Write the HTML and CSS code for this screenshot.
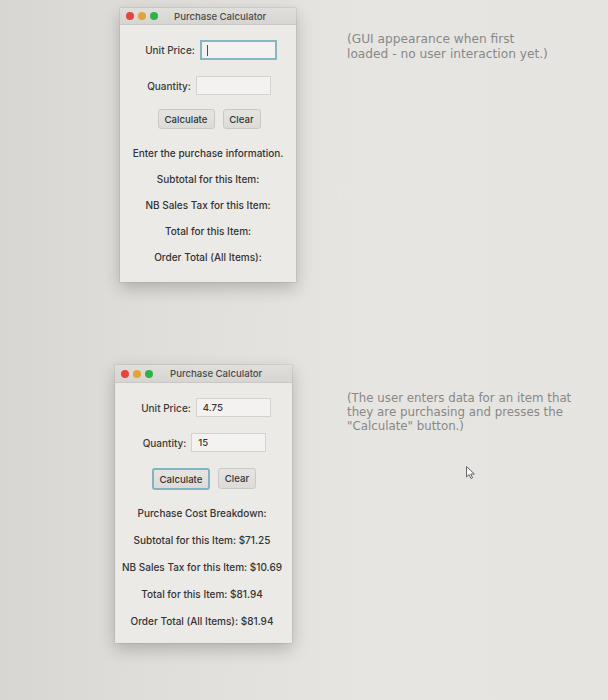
FILE: index.html
```html
<!DOCTYPE html>
<html>
<head>
<meta charset="utf-8">
<link rel="stylesheet" href="styles.css">
</head>
<body>
<div class="desk">
  <section class="row row1">
    <div class="win win1">
      <div class="titlebar">
        <span class="dot red"></span><span class="dot yellow"></span><span class="dot green"></span>
        <span class="title">Purchase Calculator</span>
      </div>
      <div class="body">
        <div class="field f1"><span class="lbl">Unit Price:</span><span class="input focus"><span class="caret"></span></span></div>
        <div class="field f2"><span class="lbl">Quantity:</span><span class="input"></span></div>
        <div class="buttons"><span class="btn calc">Calculate</span><span class="btn clear">Clear</span></div>
        <div class="lines">
          <p>Enter the purchase information.</p>
          <p>Subtotal for this Item:</p>
          <p>NB Sales Tax for this Item:</p>
          <p>Total for this Item:</p>
          <p>Order Total (All Items):</p>
        </div>
      </div>
    </div>
    <div class="note note1">
      <p>(GUI appearance when first</p>
      <p>loaded - no user interaction yet.)</p>
    </div>
    <span class="mark">C</span>
  </section>

  <section class="row row2">
    <div class="win win2">
      <div class="titlebar">
        <span class="dot red"></span><span class="dot yellow"></span><span class="dot green"></span>
        <span class="title">Purchase Calculator</span>
      </div>
      <div class="body">
        <div class="field f1"><span class="lbl">Unit Price:</span><span class="input">4.75</span></div>
        <div class="field f2"><span class="lbl">Quantity:</span><span class="input">15</span></div>
        <div class="buttons"><span class="btn calc focus">Calculate</span><span class="btn clear">Clear</span></div>
        <div class="lines">
          <p>Purchase Cost Breakdown:</p>
          <p>Subtotal for this Item: $71.25</p>
          <p>NB Sales Tax for this Item: $10.69</p>
          <p>Total for this Item: $81.94</p>
          <p>Order Total (All Items): $81.94</p>
        </div>
      </div>
    </div>
    <div class="note note2">
      <p>(The user enters data for an item that</p>
      <p>they are purchasing and presses the</p>
      <p>"Calculate" button.)</p>
      <svg class="cursor" width="12" height="15" viewBox="0 0 12 15"><path d="M1.5 1.5 L1.5 12 L4 9.6 L6 13.6 L7.6 12.8 L5.7 9 L9.4 9 Z" fill="#fafafa" stroke="#555" stroke-width="0.9" stroke-linejoin="round"/></svg>
    </div>
  </section>
</div>
</body>
</html>
```

FILE: styles.css
```css
html, body {
  margin: 0;
  padding: 0;
}
body {
  width: 608px;
  height: 700px;
  overflow: hidden;
  background: linear-gradient(90deg, #d8d6d2 0%, #e0deda 25%, #e7e5e1 60%, #e6e4e0 100%);
  font-family: "Inter", "Liberation Sans", sans-serif;
}
.desk {
  display: flex;
  flex-direction: column;
}
.row {
  display: flex;
  align-items: flex-start;
  position: relative;
}
.row1 {
  padding-top: 8px;
  padding-left: 120px;
}
.row2 {
  padding-top: 83px;
  padding-left: 115px;
}
.win {
  background: #ebeae7;
  box-shadow: 0 0 1px rgba(0,0,0,0.35), 0 6px 16px rgba(0,0,0,0.22);
  display: flex;
  flex-direction: column;
}
.win1 { width: 176px; height: 274px; }
.win2 { width: 177px; height: 278px; }
.titlebar {
  height: 16px;
  background: linear-gradient(#e0dfdc, #d6d5d2);
  border-bottom: 1px solid #c9c8c5;
  display: flex;
  align-items: center;
  padding-left: 6px;
  gap: 4px;
}
.win2 .titlebar { height: 17px; }
.dot {
  width: 8px;
  height: 8px;
  border-radius: 50%;
}
.red { background: #e6443f; }
.yellow { background: #e3a33a; }
.green { background: #32b14a; }
.title {
  margin-left: 12px;
  font-size: 9.6px;
  color: #4a4a4a;
  font-weight: 500;
}
.win2 .title { margin-left: 13px; }
.body {
  display: flex;
  flex-direction: column;
  align-items: center;
}
.field {
  display: flex;
  align-items: center;
  gap: 5px;
  font-size: 10px;
  font-weight: 500;
  color: #3a3a3a;
}
.win1 .f1 { margin-top: 15px; margin-left: 6px; }
.win1 .f2 { margin-top: 16px; margin-left: 2px; }
.win2 .f1 { margin-top: 15px; margin-left: 5px; }
.win2 .f2 { margin-top: 16px; margin-left: 2px; }
.input {
  width: 75px;
  height: 19px;
  box-sizing: border-box;
  background: #f3f2f0;
  border: 1px solid #d3d2cf;
  display: flex;
  align-items: center;
  padding-left: 6px;
  font-size: 9.6px;
  color: #333;
}
.win1 .f1 .input { width: 77px; height: 20px; }
.input.focus {
  border: 2px solid #86b6c2;
  padding-left: 5px;
}
.caret {
  width: 1px;
  height: 11px;
  background: #7a3a3a;
}
.buttons {
  display: flex;
  gap: 8px;
  margin-left: 2px;
}
.win1 .buttons { margin-top: 14px; }
.win2 .buttons { margin-top: 16px; margin-left: 1px; }
.btn {
  height: 20px;
  box-sizing: border-box;
  border: 1px solid #cbc9c6;
  border-radius: 3px;
  background: linear-gradient(#e6e5e2, #dcdbd8);
  font-size: 9.6px;
  font-weight: 500;
  color: #333;
  display: flex;
  align-items: center;
  justify-content: center;
}
.calc { width: 57px; }
.clear { width: 38px; }
.btn.focus {
  height: 22px;
  border: 2px solid #7fb4c4;
  width: 58px;
}
.win2 .clear { height: 21px; }
.lines {
  display: flex;
  flex-direction: column;
  align-items: center;
  font-size: 10px;
  font-weight: 500;
  color: #333;
}
.lines p {
  margin: 0;
  line-height: 12px;
  white-space: nowrap;
}
.win1 .lines { margin-top: 18px; gap: 14px; }
.win2 .lines { margin-top: 17px; gap: 15px; }
.win2 .lines p { margin-left: -3px; }
.note {
  font-family: "DejaVu Sans", sans-serif;
  color: #888;
  font-size: 12.2px;
  position: relative;
  white-space: nowrap;
}
.note p { margin: 0; }
.note1 {
  margin-left: 51px;
  margin-top: 24px;
  line-height: 15px;
}
.note2 {
  margin-left: 55px;
  margin-top: 26px;
  line-height: 14px;
  font-size: 11.8px;
}
.cursor {
  position: absolute;
  left: 118px;
  top: 74px;
}
.mark {
  position: absolute;
  left: 338px;
  top: 186px;
  font-family: "DejaVu Sans", sans-serif;
  font-size: 13px;
  color: #e9e8e6;
}
```
